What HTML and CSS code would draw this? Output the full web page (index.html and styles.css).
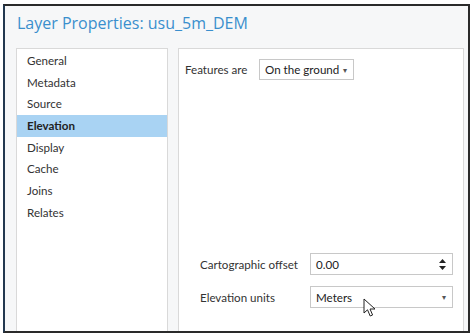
FILE: index.html
```html
<!DOCTYPE html>
<html lang="en">
<head>
  <meta charset="UTF-8" />
  <title>Layer Properties</title>
  <link rel="stylesheet" href="styles.css">
</head>
<body>
  <div class="window">
    <h1 class="title">Layer Properties: usu_5m_DEM</h1>
    <div class="content">
      <ul class="nav">
        <li>General</li>
        <li>Metadata</li>
        <li>Source</li>
        <li class="active">Elevation</li>
        <li>Display</li>
        <li>Cache</li>
        <li>Joins</li>
        <li>Relates</li>
      </ul>

      <div class="pane">
        <div class="row top-row">
          <span class="label">Features are</span>
          <div class="select small">
            <span>On the ground</span>
            <span class="caret">&#9662;</span>
          </div>
        </div>

        <div class="bottom">
          <div class="row">
            <span class="label wide">Cartographic offset</span>
            <div class="select field">
              <span>0.00</span>
              <span class="spin">
                <svg width="7" height="11" viewBox="0 0 7 11"><path d="M3.5 0L7 4H0z M3.5 11L0 7h7z" fill="#222"/></svg>
              </span>
            </div>
          </div>
          <div class="row">
            <span class="label wide">Elevation units</span>
            <div class="select field">
              <span>Meters</span>
              <span class="caret">&#9662;</span>
              <svg class="cursor" width="14" height="20" viewBox="0 0 14 20">
                <path d="M1 1 L1 15 L4.5 11.8 L7.2 18 L9.6 17 L7 11 L12 11 Z" fill="#fff" stroke="#222" stroke-width="1" stroke-linejoin="round"/>
              </svg>
            </div>
          </div>
        </div>
      </div>
    </div>
  </div>
</body>
</html>
```

FILE: styles.css
```css
body {
  margin: 0;
  background: #fff;
  font-family: 'Lato', 'Open Sans', sans-serif;
  font-size: 11.6px;
  color: #333;
}

.window {
  margin: 4px 0 0 3px;
  width: 463px;
  height: 325px;
  border: 2px solid #2a2a2a;
  border-left-color: #22384f;
  background: #f6f7f8;
  display: flex;
  flex-direction: column;
  overflow: hidden;
}

.title {
  margin: 0;
  padding: 6px 0 0 12px;
  height: 36px;
  font-family: 'Open Sans', sans-serif;
  font-size: 16px;
  font-weight: 400;
  color: #3a8fcd;
}

.content {
  flex: 1;
  display: flex;
  gap: 10px;
  padding: 0 4px 0 11px;
}

.nav {
  list-style: none;
  margin: 0;
  padding: 1px 0 0;
  width: 150px;
  background: #fff;
  border: 1px solid #d9d9d9;
  border-bottom: none;
}

.nav li {
  height: 21.7px;
  line-height: 21.7px;
  padding-left: 10px;
}

.nav .active {
  background: #a9d3f3;
  font-weight: 700;
  color: #222;
}

.pane {
  flex: 1;
  background: #fff;
  border: 1px solid #d9d9d9;
  border-bottom: none;
  display: flex;
  flex-direction: column;
  padding: 10px 0 23px;
}

.row {
  display: flex;
  align-items: center;
}

.top-row {
  padding-left: 6px;
}

.label {
  width: 74px;
  flex-shrink: 0;
  white-space: nowrap;
}

.label.wide {
  width: 110px;
}

.select {
  position: relative;
  flex-shrink: 0;
  white-space: nowrap;
  border: 1px solid #c8c8c8;
  background: #fff;
  display: flex;
  align-items: center;
  justify-content: space-between;
  padding: 0 6px 0 5px;
  box-sizing: border-box;
  color: #222;
}

.select.small {
  width: 95px;
  height: 21px;
}

.select.field {
  width: 143px;
  height: 22px;
}

.bottom {
  margin-top: auto;
  padding-left: 21px;
  display: flex;
  flex-direction: column;
  gap: 11px;
}

.caret {
  font-size: 8px;
  color: #555;
}

.spin {
  display: flex;
  align-items: center;
}

.cursor {
  position: absolute;
  left: 52px;
  top: 11px;
}
```
